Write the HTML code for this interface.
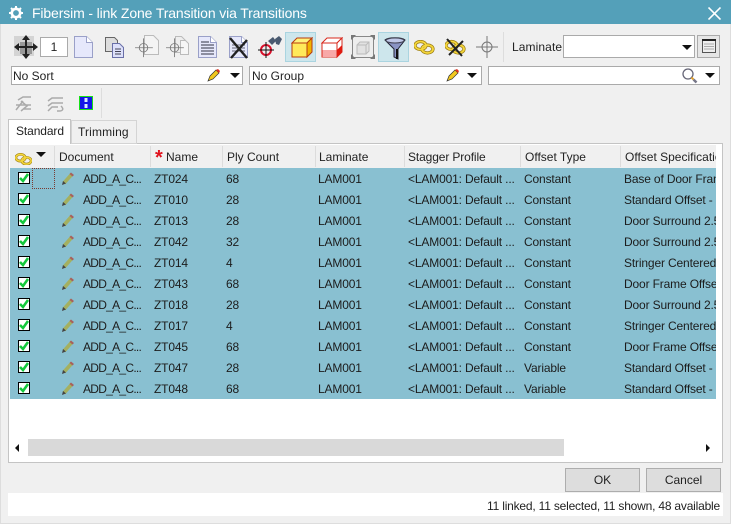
<!DOCTYPE html>
<html>
<head>
<meta charset="utf-8">
<style>
html,body{margin:0;padding:0;background:#f0f0f0}
#w{position:relative;width:731px;height:524px;overflow:hidden;background:#f0f0f0;font:12px "Liberation Sans",sans-serif;color:#222;box-shadow:inset 0 0 0 1px #ddd}
#w div,#w span,#w svg.a{position:absolute}
span{white-space:nowrap;line-height:16px}
.box{background:#fff;border:1px solid #aaa;box-sizing:border-box}
.hl{background:#cde6ec;border:1px solid #aad4e0;box-sizing:border-box}
.sep{background:#ddd;width:1px}
.arr{width:0;height:0;border-left:5px solid transparent;border-right:5px solid transparent;border-top:5px solid #111}
.r{left:10px;width:706px;height:21px;overflow:hidden;background:#89c0d1}
.r span{top:3px;color:#1c1c1c;letter-spacing:-.15px}
.r span.d{letter-spacing:-.72px}
.r svg{position:absolute}
.h{top:149px;color:#222}
.hs{top:146px;height:21px;width:1px;background:#dcdcdc}
.btn{background:#ddd;border:1px solid #adadad;box-sizing:border-box;text-align:center;line-height:22px;top:468px;width:75px;height:24px}
</style>
</head>
<body>
<div id="w">
<svg width="0" height="0" style="position:absolute">
<defs>
<g id="chk"><rect x=".5" y=".5" width="11" height="11" fill="#fff" stroke="#000"/><path d="M2 6l3 3 5-7" fill="none" stroke="#14c83c" stroke-width="2.600"/></g>
<g id="pen"><path d="M3 12L11 3" stroke="#a4b060" stroke-width="3.600" fill="none"/><path d="M10 1.500l3 2.500-1.500 1.500-3-2.500z" fill="#a8605c"/><path d="M1 14l1-4 3 2.500z" fill="#444"/></g>
<g id="lnk" fill="none"><ellipse cx="6.500" cy="5.500" rx="5.500" ry="4" stroke="#9a7c10" stroke-width="3.200"/><ellipse cx="13.500" cy="9" rx="5.500" ry="4" stroke="#9a7c10" stroke-width="3.200"/><ellipse cx="6.500" cy="5.500" rx="5.500" ry="4" stroke="#f4d63c" stroke-width="1.800"/><ellipse cx="13.500" cy="9" rx="5.500" ry="4" stroke="#f4d63c" stroke-width="1.800"/></g>
<g id="cross" fill="none" stroke="#777"><circle cx="11" cy="11" r="5"/><path d="M0 11h22M11 0v22"/></g>
<g id="doc"><path d="M.5.5h12l6 6v15H.5z" fill="#e6e8fb" stroke="#9aa0c8"/><path d="M12.500.5v6h6" fill="#fff" stroke="#9aa0c8"/></g>
</defs>
</svg>

<div style="left:0;top:0;width:731px;height:24px;background:#54a0b9"></div>
<svg class="a" style="left:9px;top:6px" width="14" height="14" viewBox="0 0 14 14"><circle cx="7" cy="7" r="4.200" fill="none" stroke="#fff" stroke-width="2.600"/><path d="M7 0v3M7 11v3M0 7h3M11 7h3M2 2l2 2M10 10l2 2M12 2l-2 2M2 12l2-2" stroke="#fff" stroke-width="2"/></svg>
<span style="left:32px;top:5px;color:#fff;font-size:14px;line-height:17px;letter-spacing:-.13px">Fibersim - link Zone Transition via Transitions</span>
<svg class="a" style="left:708px;top:7px" width="13" height="13"><path d="M.5.5l12 12M12.500.5l-12 12" stroke="#fff" stroke-width="1.600"/></svg>

<!-- toolbar row 1 -->
<svg class="a" style="left:14px;top:35px" width="24" height="24" viewBox="0 0 24 24"><rect x="0" y="1" width="20" height="20" fill="#c8c8c8" opacity=".7"/><rect x="6" y="7" width="12" height="12" fill="#999"/><path d="M12 0l4 5h-8zM12 24l4-5H8zM0 12l5-4v8zM24 12l-5-4v8z" fill="#222"/><path d="M12 4v16M4 12h16" stroke="#222" stroke-width="2"/></svg>
<div class="box" style="left:40px;top:37px;width:28px;height:20px;text-align:center;line-height:18px">1</div>
<svg class="a" style="left:74px;top:36px" width="20" height="23"><use href="#doc"/></svg>
<svg class="a" style="left:105px;top:37px" width="20" height="22"><path d="M.5.5h9l3 3v11H.5z" fill="#ddd" stroke="#666"/><path d="M7.500 6.500h7l4 4v10h-11z" fill="#dde0fa" stroke="#6a70a8"/><path d="M10 12h6M10 14.500h6M10 17h6" stroke="#445"/></svg>
<svg class="a" style="left:135px;top:35px" width="24" height="24"><path d="M9.500.5h9l5 5v14h-14z" fill="#f4f4f4" stroke="#bbb"/><use href="#cross" y="4" x="-1" transform="scale(.85)"/></svg>
<svg class="a" style="left:166px;top:35px" width="24" height="24"><path d="M9.500 1.500h6l4 4v12h-10z" fill="#eee" stroke="#bbb"/><path d="M14.500 5.500h5l3 3v11h-8z" fill="#f6f6f6" stroke="#bbb"/><use href="#cross" y="4" x="-1" transform="scale(.85)"/></svg>
<svg class="a" style="left:198px;top:36px" width="20" height="23"><use href="#doc"/><path d="M3 6h8M3 9h13M3 12h13M3 15h13M3 18h13" stroke="#334"/></svg>
<svg class="a" style="left:229px;top:36px" width="20" height="23"><use href="#doc"/><path d="M3 9h13M3 12h13M3 15h13" stroke="#667"/><path d="M1 2l17 20M18 4L2 22" stroke="#222" stroke-width="2.400"/></svg>
<svg class="a" style="left:258px;top:34px" width="25" height="25"><circle cx="8" cy="16" r="5" fill="none" stroke="#d8102a" stroke-width="2"/><path d="M8 8v16M0 16h16" stroke="#111"/><path d="M10 7l5-4 3 4-4 4zM17 5l4-3 3 3-3 6-3-1z" fill="#4a5a70"/></svg>

<div class="hl" style="left:285px;top:32px;width:31px;height:30px"></div>
<svg class="a" style="left:291px;top:37px" width="22" height="22"><path d="M1 6l5-5h15l-5 5z" fill="#fff27a" stroke="#b83a10"/><rect x="1" y="6" width="15" height="14" fill="#ffe95a" stroke="#b83a10"/><path d="M16 6v14l5-5V1z" fill="#f0b400" stroke="#b83a10"/></svg>
<svg class="a" style="left:321px;top:37px" width="22" height="22"><path d="M1 6l5-5h15l-5 5z" fill="#fff" stroke="#d8281c"/><rect x="1" y="6" width="15" height="14" fill="#fff" stroke="#d8281c"/><path d="M1.500 13h14v7h-14z" fill="#f8a8a8"/><path d="M16 6v14l5-5V1z" fill="#fff" stroke="#d8281c"/><path d="M16 13v7l5-5V8z" fill="#e01a10"/></svg>
<svg class="a" style="left:351px;top:35px" width="24" height="24"><rect x="1.500" y="1.500" width="21" height="21" fill="#eee" stroke="#888"/><path d="M0 0h5L0 5zM24 0h-5l5 5zM0 24h5l-5-5zM24 24h-5l5-5z" fill="#777"/><path d="M6 10l3-3h9v9l-3 3H6z" fill="#e2e2e2" stroke="#bbb"/><path d="M6 10h9v9M15 10l3-3" fill="none" stroke="#bbb"/></svg>
<div class="hl" style="left:378px;top:32px;width:31px;height:30px"></div>
<svg class="a" style="left:384px;top:37px" width="22" height="23"><path d="M1 3c3-3 17-3 20 0l-7 9v10l-4-2v-8z" fill="#8a94c4" stroke="#223"/><ellipse cx="11" cy="3.500" rx="9" ry="2.500" fill="#c0c8e8" stroke="#445"/><path d="M12 12h2v10h-2z" fill="#111"/></svg>
<svg class="a" style="left:414px;top:40px" width="21" height="15"><use href="#lnk"/></svg>
<svg class="a" style="left:445px;top:38px" width="21" height="19"><g transform="translate(0 2)"><use href="#lnk"/></g><path d="M2 1l15 17M18 3L4 17" stroke="#222" stroke-width="2"/></svg>
<svg class="a" style="left:476px;top:36px" width="22" height="22"><use href="#cross"/></svg>
<div class="sep" style="left:503px;top:32px;height:30px"></div>
<span style="left:512px;top:39px;letter-spacing:.1px">Laminate</span>
<div class="box" style="left:563px;top:35px;width:132px;height:23px"></div>
<div class="arr" style="left:682px;top:45px"></div>
<div class="box" style="left:697px;top:35px;width:23px;height:23px;background:#e6e6e6"></div>
<svg class="a" style="left:702px;top:39px" width="14" height="14"><rect x=".5" y=".5" width="13" height="13" fill="#eee" stroke="#555"/><rect width="14" height="2" fill="#222"/><path d="M2 5h10M2 7.500h10M2 10h10" stroke="#aaa"/></svg>

<!-- row 2 -->
<div class="box" style="left:11px;top:66px;width:232px;height:19px"></div>
<span style="left:13px;top:68px">No Sort</span>
<svg class="a" style="left:207px;top:69px" width="13" height="13"><path d="M1 12l2-5 6-6 3 3-6 6z" fill="#f2c81e" stroke="#333" stroke-width=".7"/><path d="M9 1l3 3 1-2-2-2z" fill="#e03020"/></svg>
<div class="arr" style="left:230px;top:73px"></div>
<div class="box" style="left:249px;top:66px;width:233px;height:19px"></div>
<span style="left:252px;top:68px">No Group</span>
<svg class="a" style="left:446px;top:69px" width="13" height="13"><path d="M1 12l2-5 6-6 3 3-6 6z" fill="#f2c81e" stroke="#333" stroke-width=".7"/><path d="M9 1l3 3 1-2-2-2z" fill="#e03020"/></svg>
<div class="arr" style="left:467px;top:73px"></div>
<div class="box" style="left:488px;top:66px;width:232px;height:19px"></div>
<svg class="a" style="left:682px;top:68px" width="16" height="16"><circle cx="6" cy="6" r="5" fill="#fff" stroke="#667" stroke-width="1.300"/><path d="M9.500 9.500l2 2" stroke="#e0a030" stroke-width="2"/><path d="M11.500 11.500l3 3" stroke="#778" stroke-width="2.500"/></svg>
<div class="arr" style="left:705px;top:73px"></div>

<!-- row 3 -->
<svg class="a" style="left:15px;top:95px" width="18" height="17" fill="none" stroke="#aaa" stroke-width="1.500"><path d="M3 5l5-3h8M1 10h15M6 6l6 5-6 5M1 15l7-9M9 14h7"/></svg>
<svg class="a" style="left:47px;top:95px" width="18" height="17" fill="none" stroke="#aaa" stroke-width="1.500"><path d="M1 6l4-3h11M1 11l4-3h11M1 16l4-4h6M14 11c3 3 2 5-2 5l-2 0"/></svg>
<svg class="a" style="left:79px;top:96px" width="14" height="14"><rect width="14" height="14" fill="#18e018"/><rect x="1" y="1" width="12" height="12" fill="#1414e8"/><path d="M5.500 2h3v4h-3zM5.500 8h3v4h-3z" fill="#d8e8ff"/></svg>
<div class="sep" style="left:101px;top:88px;height:30px"></div>

<!-- panel -->
<div style="left:8px;top:143px;width:715px;height:320px;background:#fff;border:1px solid #c4c4c4;box-sizing:border-box"></div>
<div style="left:71px;top:120px;width:66px;height:24px;background:#f0f0f0;border:1px solid #d4d4d4;box-sizing:border-box"></div>
<span style="left:78px;top:124px;letter-spacing:.15px">Trimming</span>
<div style="left:8px;top:119px;width:63px;height:25px;background:#fff;border:1px solid #c4c4c4;border-bottom:0;box-sizing:border-box"></div>
<span style="left:16px;top:123px;letter-spacing:-.1px">Standard</span>

<!-- header -->
<div style="left:10px;top:145px;width:706px;height:23px;background:#f0f0f0"></div>
<svg class="a" style="left:15px;top:153px" width="17" height="12" viewBox="0 0 20 14"><use href="#lnk"/></svg>
<div class="arr" style="left:36px;top:152px"></div>
<div class="hs" style="left:54px"></div><div class="hs" style="left:150px"></div><div class="hs" style="left:222px"></div><div class="hs" style="left:315px"></div><div class="hs" style="left:404px"></div><div class="hs" style="left:520px"></div><div class="hs" style="left:620px"></div>
<span class="h" style="left:59px">Document</span>
<span class="h" style="left:155px;top:150px;color:#e0101c;font-size:20px;font-weight:bold">*</span>
<span class="h" style="left:166px">Name</span>
<span class="h" style="left:227px">Ply Count</span>
<span class="h" style="left:319px">Laminate</span>
<span class="h" style="left:408px;letter-spacing:-.12px">Stagger Profile</span>
<span class="h" style="left:525px">Offset Type</span>
<span class="h" style="left:625px;width:91px;overflow:hidden">Offset Specification</span>

<!-- rows -->
<div class="r" style="top:168px"><svg style="left:8px;top:4px" width="12" height="12"><use href="#chk"/></svg><svg style="left:51px;top:3px" width="14" height="14"><use href="#pen"/></svg><span class="d" style="left:73px">ADD_A_C...</span><span style="left:144px">ZT024</span><span style="left:216px">68</span><span style="left:308px">LAM001</span><span style="left:398px">&lt;LAM001: Default ...</span><span style="left:514px">Constant</span><span style="left:614px">Base of Door Frame</span></div>
<div class="r" style="top:189px"><svg style="left:8px;top:4px" width="12" height="12"><use href="#chk"/></svg><svg style="left:51px;top:3px" width="14" height="14"><use href="#pen"/></svg><span class="d" style="left:73px">ADD_A_C...</span><span style="left:144px">ZT010</span><span style="left:216px">28</span><span style="left:308px">LAM001</span><span style="left:398px">&lt;LAM001: Default ...</span><span style="left:514px">Constant</span><span style="left:614px">Standard Offset - 1</span></div>
<div class="r" style="top:210px"><svg style="left:8px;top:4px" width="12" height="12"><use href="#chk"/></svg><svg style="left:51px;top:3px" width="14" height="14"><use href="#pen"/></svg><span class="d" style="left:73px">ADD_A_C...</span><span style="left:144px">ZT013</span><span style="left:216px">28</span><span style="left:308px">LAM001</span><span style="left:398px">&lt;LAM001: Default ...</span><span style="left:514px">Constant</span><span style="left:614px">Door Surround 2.5</span></div>
<div class="r" style="top:231px"><svg style="left:8px;top:4px" width="12" height="12"><use href="#chk"/></svg><svg style="left:51px;top:3px" width="14" height="14"><use href="#pen"/></svg><span class="d" style="left:73px">ADD_A_C...</span><span style="left:144px">ZT042</span><span style="left:216px">32</span><span style="left:308px">LAM001</span><span style="left:398px">&lt;LAM001: Default ...</span><span style="left:514px">Constant</span><span style="left:614px">Door Surround 2.5</span></div>
<div class="r" style="top:252px"><svg style="left:8px;top:4px" width="12" height="12"><use href="#chk"/></svg><svg style="left:51px;top:3px" width="14" height="14"><use href="#pen"/></svg><span class="d" style="left:73px">ADD_A_C...</span><span style="left:144px">ZT014</span><span style="left:216px">4</span><span style="left:308px">LAM001</span><span style="left:398px">&lt;LAM001: Default ...</span><span style="left:514px">Constant</span><span style="left:614px">Stringer Centered</span></div>
<div class="r" style="top:273px"><svg style="left:8px;top:4px" width="12" height="12"><use href="#chk"/></svg><svg style="left:51px;top:3px" width="14" height="14"><use href="#pen"/></svg><span class="d" style="left:73px">ADD_A_C...</span><span style="left:144px">ZT043</span><span style="left:216px">68</span><span style="left:308px">LAM001</span><span style="left:398px">&lt;LAM001: Default ...</span><span style="left:514px">Constant</span><span style="left:614px">Door Frame Offset</span></div>
<div class="r" style="top:294px"><svg style="left:8px;top:4px" width="12" height="12"><use href="#chk"/></svg><svg style="left:51px;top:3px" width="14" height="14"><use href="#pen"/></svg><span class="d" style="left:73px">ADD_A_C...</span><span style="left:144px">ZT018</span><span style="left:216px">28</span><span style="left:308px">LAM001</span><span style="left:398px">&lt;LAM001: Default ...</span><span style="left:514px">Constant</span><span style="left:614px">Door Surround 2.5</span></div>
<div class="r" style="top:315px"><svg style="left:8px;top:4px" width="12" height="12"><use href="#chk"/></svg><svg style="left:51px;top:3px" width="14" height="14"><use href="#pen"/></svg><span class="d" style="left:73px">ADD_A_C...</span><span style="left:144px">ZT017</span><span style="left:216px">4</span><span style="left:308px">LAM001</span><span style="left:398px">&lt;LAM001: Default ...</span><span style="left:514px">Constant</span><span style="left:614px">Stringer Centered</span></div>
<div class="r" style="top:336px"><svg style="left:8px;top:4px" width="12" height="12"><use href="#chk"/></svg><svg style="left:51px;top:3px" width="14" height="14"><use href="#pen"/></svg><span class="d" style="left:73px">ADD_A_C...</span><span style="left:144px">ZT045</span><span style="left:216px">68</span><span style="left:308px">LAM001</span><span style="left:398px">&lt;LAM001: Default ...</span><span style="left:514px">Constant</span><span style="left:614px">Door Frame Offset</span></div>
<div class="r" style="top:357px"><svg style="left:8px;top:4px" width="12" height="12"><use href="#chk"/></svg><svg style="left:51px;top:3px" width="14" height="14"><use href="#pen"/></svg><span class="d" style="left:73px">ADD_A_C...</span><span style="left:144px">ZT047</span><span style="left:216px">28</span><span style="left:308px">LAM001</span><span style="left:398px">&lt;LAM001: Default ...</span><span style="left:514px">Variable</span><span style="left:614px">Standard Offset - 1</span></div>
<div class="r" style="top:378px"><svg style="left:8px;top:4px" width="12" height="12"><use href="#chk"/></svg><svg style="left:51px;top:3px" width="14" height="14"><use href="#pen"/></svg><span class="d" style="left:73px">ADD_A_C...</span><span style="left:144px">ZT048</span><span style="left:216px">68</span><span style="left:308px">LAM001</span><span style="left:398px">&lt;LAM001: Default ...</span><span style="left:514px">Variable</span><span style="left:614px">Standard Offset - 1</span></div>
<div style="left:32px;top:168px;width:23px;height:21px;border:1px dotted #7a3a30;box-sizing:border-box"></div>

<!-- scrollbar -->
<div style="left:28px;top:439px;width:536px;height:17px;background:#d9d9d9"></div>
<div style="left:15px;top:444px;width:0;height:0;border-top:4px solid transparent;border-bottom:4px solid transparent;border-right:4px solid #111"></div>
<div style="left:706px;top:444px;width:0;height:0;border-top:4px solid transparent;border-bottom:4px solid transparent;border-left:4px solid #111"></div>

<!-- footer -->
<div class="btn" style="left:565px">OK</div>
<div class="btn" style="left:646px">Cancel</div>
<div style="left:8px;top:493px;width:715px;height:23px;background:#fff"></div>
<span style="right:11px;top:498px;letter-spacing:-.2px">11 linked, 11 selected, 11 shown, 48 available</span>
</div>
</body>
</html>
